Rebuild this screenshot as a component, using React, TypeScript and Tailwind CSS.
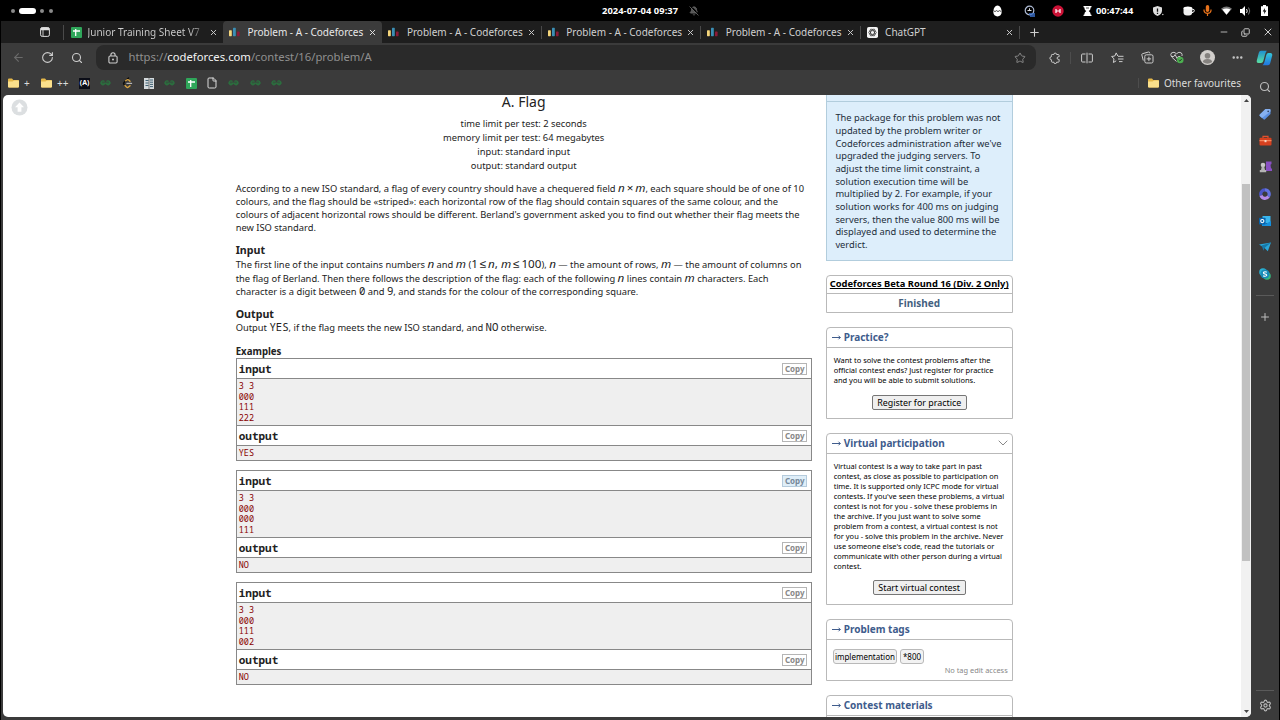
import type { ReactNode } from 'react'
import clsx from 'clsx'
import { ArrowLeft, BellOff, Copy, File, Minus, MoreHorizontal, Plus, RotateCw, Search, Settings, Star, X } from 'lucide-react'

const samples = [
    { input: ['3 3', '000', '111', '222'], output: 'YES' },
    { input: ['3 3', '000', '000', '111'], output: 'NO', hovered: true },
    { input: ['3 3', '000', '111', '002'], output: 'NO' }
]

const alertLines = [
    'The package for this problem was not',
    'updated by the problem writer or',
    "Codeforces administration after we've",
    'upgraded the judging servers. To',
    'adjust the time limit constraint, a',
    'solution execution time will be',
    'multiplied by 2. For example, if your',
    'solution works for 400 ms on judging',
    'servers, then the value 800 ms will be',
    'displayed and used to determine the',
    'verdict.'
]

const practiceLines = [
    'Want to solve the contest problems after the',
    'official contest ends? Just register for practice',
    'and you will be able to submit solutions.'
]

const virtualLines = [
    'Virtual contest is a way to take part in past',
    'contest, as close as possible to participation on',
    'time. It is supported only ICPC mode for virtual',
    "contests. If you've seen these problems, a virtual",
    'contest is not for you - solve these problems in',
    'the archive. If you just want to solve some',
    'problem from a contest, a virtual contest is not',
    'for you - solve this problem in the archive. Never',
    "use someone else's code, read the tutorials or",
    'communicate with other person during a virtual',
    'contest.'
]

/* ---------- icons ---------- */

function Sheets() {
    return (
        <svg className="w-[11px] h-[11px]" viewBox="0 0 11 11">
            <rect width="11" height="11" rx="1" fill="#2fa65a" />
            <path d="M2 4h7M4.7 2v7" stroke="#fff" strokeWidth="1.3" />
        </svg>
    )
}

function CodeforcesIcon() {
    return (
        <svg className="w-[11px] h-[10px] ml-px" viewBox="0 0 11 10">
            <rect x="0" y="3.2" width="2.8" height="6" rx=".6" fill="#f5d67b" />
            <rect x="4" y="0.8" width="2.8" height="8.4" rx=".6" fill="#3b8fb5" />
            <rect x="8" y="4.6" width="2.6" height="4.6" rx=".6" fill="#8c1a38" />
        </svg>
    )
}

function GptIcon() {
    return (
        <svg className="w-[11px] h-[11px] ml-px" viewBox="0 0 11 11">
            <rect width="11" height="11" rx="1.8" fill="#f4f4f4" />
            <g fill="none" stroke="#333" strokeWidth=".7">
                <ellipse cx="5.5" cy="5.5" rx="3.8" ry="1.9" />
                <ellipse cx="5.5" cy="5.5" rx="3.8" ry="1.9" transform="rotate(60 5.5 5.5)" />
                <ellipse cx="5.5" cy="5.5" rx="3.8" ry="1.9" transform="rotate(120 5.5 5.5)" />
            </g>
        </svg>
    )
}

function Folder() {
    return (
        <svg className="w-[11px] h-[10px]" viewBox="0 0 11 10">
            <path d="M0 1.5Q0 .5 1 .5h3L5.3 2H10q1 0 1 1v5.500q0 1-1 1H1q-1 0-1-1z" fill="#e5b84a" />
            <path d="M0 3.500h4.500L6 2.600h5v6q0 .9-1 .9H1q-1 0-1-1z" fill="#fbe08c" />
        </svg>
    )
}

function GfgIcon() {
    return (
        <svg className="w-[11px] h-[6px]" viewBox="0 0 11 6" fill="none" stroke="#2b6e3e" strokeWidth="1.3">
            <path d="M4.500 1.600A1.900 1.900 0 1 0 4.900 3.200H.3M6.500 1.600A1.900 1.900 0 1 1 6.100 3.200h4.600M4.900 3.200h1.200" />
        </svg>
    )
}

function BracketIcon() {
    return (
        <span className="w-[11px] h-[11px] bg-[#0b0d17] text-white text-[7px] leading-[10px] font-bold text-center">(A)</span>
    )
}

function LeetIcon() {
    return (
        <svg className="w-[11px] h-[12px]" viewBox="0 0 11 12" fill="none" strokeWidth="1.4" strokeLinecap="round">
            <path d="M6.500 1L2 5.500q-.9 1 0 2L3 8.600" stroke="#0c0c0c" />
            <path d="M3 8.600l1.500 1.500q1 .9 2 0L8 8.700M3.700 3.800l1-.8q1-.8 2 0L8 4.200" stroke="#d9a441" />
            <path d="M5 6.400h4.500" stroke="#b5b5b5" />
        </svg>
    )
}

function GridIcon() {
    return (
        <svg className="w-[10px] h-[11px]" viewBox="0 0 10 11">
            <rect width="10" height="11" fill="#d5dadd" />
            <path d="M1.500 2.500h3M1.500 5h3M1.500 7.500h3M6 2h3M6 4.200h3M6 6.400h3M6 8.600h3" stroke="#3f6274" strokeWidth="1" />
            <path d="M5 0v11" stroke="#3a3a3a" strokeWidth=".6" />
        </svg>
    )
}

function WorkspaceIcon() {
    return (
        <svg className="w-[10px] h-[10px]" viewBox="0 0 10 10">
            <rect x=".6" y=".6" width="8.8" height="8.8" rx="1.6" fill="none" stroke="#ddd" strokeWidth="1" />
            <path d="M.6 2Q.8.6 2 .6h6Q9.4.6 9.4 2v1.2H.6z" fill="#ddd" />
            <path d="M3 3v6" stroke="#ddd" strokeWidth=".9" />
        </svg>
    )
}

function LockIcon() {
    return (
        <svg className="w-[10px] h-[12px]" viewBox="0 0 10 12" fill="none" stroke="currentColor">
            <rect x=".9" y="4" width="8.200" height="7" rx="1.200" strokeWidth="1.100" />
            <path d="M2.900 4V2.900a2.100 2.100 0 0 1 4.200 0V4" strokeWidth="1.100" />
            <circle cx="5" cy="7.500" r="1" fill="currentColor" stroke="none" />
        </svg>
    )
}

function ExtensionIcon() {
    return (
        <svg className="w-[12px] h-[12px]" viewBox="0 0 12 12" fill="none" stroke="currentColor" strokeLinejoin="round">
            <path d="M3.200 2.500h1.600a1.400 1.400 0 0 1 2.800 0h1.700q.8 0 .8.800v1.500h-.7a1.300 1.300 0 0 0 0 2.600h.7v2q0 .8-.8.800H7.600a1.400 1.400 0 0 1-2.800 0H3.200q-.8 0-.8-.8V7.700a1.500 1.500 0 0 1 0-3V3.300q0-.8.8-.8z" />
        </svg>
    )
}

function CopilotIcon() {
    return (
        <svg className="w-[17px] h-[16px]" viewBox="0 0 17 16">
            <defs>
                <linearGradient id="cpa" x1="0" y1="0" x2="0" y2="1">
                    <stop offset="0" stopColor="#1f8fd0" />
                    <stop offset="1" stopColor="#5be0a2" />
                </linearGradient>
                <linearGradient id="cpb" x1="0" y1="0" x2="0" y2="1">
                    <stop offset="0" stopColor="#35c8d8" />
                    <stop offset="1" stopColor="#2175e0" />
                </linearGradient>
            </defs>
            <path d="M5 .8h5.800Q9.600 2 8.900 5L7.300 11Q6.700 13 5 13H2.600Q.3 13 .8 10.500L2.800 2.800Q3.300.8 5 .8z" fill="url(#cpa)" />
            <path d="M12 15.300H6.500Q8 14 8.600 11.500L10.300 5Q10.800 3 12.500 3h1.900q2.300 0 1.800 2.500L14.200 13.300Q13.700 15.300 12 15.300z" fill="url(#cpb)" />
        </svg>
    )
}

/* ---------- desktop top bar ---------- */

function TopBar() {
    return (
        <div className="flex items-center h-[21px] bg-black text-white text-[9.33px] font-bold shrink-0">
            <div className="flex items-center w-[602px] pl-[11px]">
                <span className="w-[4px] h-[4px] rounded-full bg-[#8a8a8a]" />
                <span className="w-[17px] h-[6px] rounded-full bg-white ml-1" />
                <span className="w-[4px] h-[4px] rounded-full bg-[#8a8a8a] ml-1" />
                <span className="w-[4px] h-[4px] rounded-full bg-[#8a8a8a] ml-[5px]" />
            </div>
            <span className="w-[87px] whitespace-nowrap tracking-[0.070px]">2024-07-04 09:37</span>
            <BellOff className="w-[10px] h-[10px] text-[#6a6a6a] fill-[#555]" />
            <div className="flex items-center ml-auto h-full pr-[11px]">
                <svg className="w-[9px] h-[12px] mr-[22px]" viewBox="0 0 9 12">
                    <path d="M4.500.5C7 .5 8.700 4 8.700 6.800S6.800 11.500 4.500 11.500.300 9.600.300 6.800 2 .5 4.500.5z" fill="#fff" />
                    <path d="M.5 5.600l1.500 1 1.500-1 1.500 1 1.500-1 1.800 1" stroke="#222" strokeWidth=".8" fill="none" />
                </svg>
                <svg className="w-[12px] h-[12px] mr-[16px]" viewBox="0 0 12 12" fill="none">
                    <circle cx="5.500" cy="5.500" r="4.300" stroke="#aebbd4" strokeWidth="1.200" />
                    <path d="M3.500 5.500h4M5.500 3.300v2" stroke="#ddd" />
                    <path d="M5 9h6M6 11h5" stroke="#3c73ce" strokeWidth="1.500" />
                </svg>
                <svg className="w-[12px] h-[12px] mr-[19px]" viewBox="0 0 12 12">
                    <circle cx="6" cy="6" r="5.700" fill="#cb1236" />
                    <path d="M4 4v4M8 4v4M4 6h4" stroke="#fff" strokeWidth="1.200" />
                </svg>
                <svg className="w-[9px] h-[10px] mr-1" viewBox="0 0 9 10" fill="#fff">
                    <path d="M.5 0h8v1.300h-.7Q7.600 4 5.700 5q1.900 1 2.100 3.700h.7V10h-8V8.700h.7Q1.400 6 3.300 5 1.400 4 1.200 1.300H.5z" />
                    <path d="M3 2h3" stroke="#000" strokeWidth=".7" />
                </svg>
                <span className="w-[57px]">00:47:44</span>
                <svg className="w-[11px] h-[10px] mr-[19px]" viewBox="0 0 11 10">
                    <path d="M4.500 0L9 1.500v3Q9 8 4.500 10 0 8 0 4.500v-3z" fill="#ddd" />
                    <path d="M4.500 2.500v3.200M4.500 6.700v1.200" stroke="#111" strokeWidth="1.300" />
                    <circle cx="9.800" cy="8.500" r=".8" fill="#bbb" />
                </svg>
                <svg className="w-[12px] h-[10px] mr-[8px]" viewBox="0 0 12 10">
                    <path d="M.5 2h8.800v4.500Q9 9.500 6 9.500H4Q.7 9.500.5 6.500z" fill="#eee" />
                    <ellipse cx="4.900" cy="2" rx="4.400" ry="1.600" fill="#fff" />
                    <path d="M9 3.300h1q1.500 0 1.300 1.500Q11 6.500 9 6.700" fill="none" stroke="#eee" />
                </svg>
                <svg className="w-[9px] h-[11px] mr-[9px]" viewBox="0 0 9 11">
                    <rect x="2.800" y="0" width="3.400" height="7" rx="1.700" fill="#e8731c" />
                    <path d="M1 4.500v1Q1.300 8.300 4.500 8.300T8 5.500v-1M4.500 8.300V11" fill="none" stroke="#e8731c" strokeWidth="1.200" />
                </svg>
                <svg className="w-[11px] h-[9px] mr-[8px]" viewBox="0 0 11 9">
                    <path d="M0 2.700Q5.500-1.500 11 2.700L5.500 8.700z" fill="#777" />
                    <path d="M1.500 3.600Q5.500 1.500 9.500 3.600L5.500 8.700z" fill="#fff" />
                </svg>
                <svg className="w-[11px] h-[10px] mr-[9px]" viewBox="0 0 11 10">
                    <path d="M0 3h2l3-3v10L2 7H0z" fill="#fff" />
                    <path d="M6.500 3q1.500 2 0 4" fill="none" stroke="#eee" />
                    <path d="M8.500 1.500q2.500 3.500 0 7" fill="none" stroke="#777" />
                </svg>
                <svg className="w-[9px] h-[11px]" viewBox="0 0 9 11">
                    <path d="M3 0h3v1.300h2V11H1V1.300h2z" fill="#fff" />
                    <path d="M5 3L2.700 6.500h1.700L4 9.200l2.400-3.600H4.700z" fill="#000" />
                </svg>
            </div>
        </div>
    )
}

/* ---------- browser chrome ---------- */

function Tab({ icon, title, active, faded, divider }: { icon: ReactNode; title: string; active?: boolean; faded?: boolean; divider?: boolean }) {
    return (
        <div className={clsx('relative flex items-center w-[159.4px] h-full pl-[5px] text-[10px] shrink-0', active ? 'bg-[#3b3b3b] text-[#e8e8e8] rounded-t-[4px]' : 'text-[#d0d0d0]')}>
            <span className={clsx('flex items-center shrink-0', faded ? 'w-[17px]' : 'w-[19.500px]')}>{icon}</span>
            <span className={clsx('w-[118px] whitespace-nowrap overflow-hidden', faded && 'bg-linear-to-r from-[#d0d0d0] from-86% to-[#444] to-98% bg-clip-text text-transparent')}>{title}</span>
            <X className={clsx('w-[9px] h-[9px]', faded ? 'ml-[3px]' : 'ml-[2px]')} strokeWidth={2.500} />
            {divider && <span className="absolute right-0 top-[5px] w-px h-[13px] bg-[#4a4a4a]" />}
        </div>
    )
}

function TabStrip() {
    return (
        <div className="flex items-center h-[22px] bg-[#1e1e1e] text-[#cfcfcf] shrink-0">
            <div className="flex items-center justify-between w-[63px] h-full pl-[39px]">
                <WorkspaceIcon />
                <span className="w-px h-[15px] bg-[#4a4a4a]" />
            </div>
            <div className="flex h-full pl-[1.500px]">
                <div className="flex w-[157.500px] overflow-hidden">
                    <Tab icon={<Sheets />} title="Junior Training Sheet V7" faded />
                </div>
                <Tab icon={<CodeforcesIcon />} title="Problem - A - Codeforces" active />
                <Tab icon={<CodeforcesIcon />} title="Problem - A - Codeforces" divider />
                <Tab icon={<CodeforcesIcon />} title="Problem - A - Codeforces" divider />
                <Tab icon={<CodeforcesIcon />} title="Problem - A - Codeforces" divider />
                <Tab icon={<GptIcon />} title="ChatGPT" divider />
            </div>
            <Plus className="w-[13px] h-[13px] ml-2" strokeWidth={2} />
            <div className="flex items-center ml-auto gap-[12px] pr-[5px]">
                <Minus className="w-[10px] h-[10px]" />
                <Copy className="w-[9px] h-[9px] -scale-x-100 rotate-180" strokeWidth={2.500} />
                <X className="w-[12px] h-[12px]" />
            </div>
        </div>
    )
}

function Tool({ children }: { children: ReactNode }) {
    return <span className="flex justify-center items-center w-[30px] shrink-0">{children}</span>
}

function Toolbar() {
    return (
        <div className="flex items-center h-[29px] text-[#cdcdcd] shrink-0">
            <div className="flex items-center w-[95px] pl-[11px]">
                <ArrowLeft className="w-[13px] h-[13px] text-[#6b6b6b]" strokeWidth={2} />
                <RotateCw className="w-[13px] h-[13px] ml-[16px]" strokeWidth={2} />
                <Search className="w-[12px] h-[12px] ml-[17px]" strokeWidth={2.200} />
            </div>
            <div className="flex items-center w-[940px] h-[25px] rounded-[8px] bg-[#2a2a2a] pl-[12px] pr-[10px]">
                <LockIcon />
                <span className="text-[11.270px] text-[#8f8f8f] ml-[10.500px]">
                    https://<span className="text-[#f2f2f2]">codeforces.com</span>/contest/16/problem/A
                </span>
                <Star className="w-[12px] h-[12px] ml-auto text-[#888]" strokeWidth={2} />
            </div>
            <div className="flex items-center pl-[4px]">
                <Tool><ExtensionIcon /></Tool>
                <span className="w-px h-[12px] mr-px bg-[#4d4d4d]" />
                <Tool>
                    <svg className="w-[12px] h-[12px]" viewBox="0 0 12 12" fill="none" stroke="currentColor">
                        <path d="M4.500 2h-3q-.9 0-.9 1v6q0 1 .9 1h3M7.500 2h3q.9 0 .9 1v6q0 1-.9 1h-3M6 .7v10.600" />
                    </svg>
                </Tool>
                <Tool>
                    <svg className="w-[13px] h-[12px]" viewBox="0 0 13 12" fill="none" stroke="currentColor" strokeLinejoin="round">
                        <path d="M6.800 4L5.200.9 3.800 4l-3.200.5L3 6.800l-.6 3.700 2.800-1.700M7 4.300h5.500M7 7h5.500M8 9.600h3.500" />
                    </svg>
                </Tool>
                <Tool>
                    <svg className="w-[13px] h-[13px]" viewBox="0 0 13 13" fill="none" stroke="currentColor">
                        <rect x="3.800" y="3.800" width="8.200" height="8.200" rx="1.500" />
                        <path d="M7.900 5.700v4.400M5.700 7.900h4.400M2.300 9.500L.8 3.800q-.2-.9.700-1.100l6-1.700q.9-.2 1.200.8l.2.600" />
                    </svg>
                </Tool>
                <Tool>
                    <svg className="w-[14px] h-[13px]" viewBox="0 0 14 13" fill="none" stroke="currentColor">
                        <path d="M6.500 10.500L1.700 6Q-.1 3.500 1.500 1.900 4 .2 6.500 2.700 9 .2 11.300 1.900 12.500 3.200 12 5M1.500 5.500h2.300l1.300-2 2 4 1.200-2h2" />
                        <circle cx="10.200" cy="9" r="3.300" fill="#4caf50" stroke="none" />
                        <path d="M8.700 9l1.100 1.100 2-2.200" stroke="#263b26" />
                    </svg>
                </Tool>
                <Tool>
                    <svg className="w-[15px] h-[15px]" viewBox="0 0 15 15">
                        <circle cx="7.500" cy="7.500" r="7.500" fill="#d2cfcc" />
                        <circle cx="7.500" cy="5.800" r="2.800" fill="#85827f" />
                        <path d="M2.800 12q.4-3 4.700-3t4.700 3q-4.700 3.500-9.400 0z" fill="#85827f" />
                    </svg>
                </Tool>
                <Tool><MoreHorizontal className="w-[13px] h-[13px]" strokeWidth={2.500} /></Tool>
                <span className="ml-[4px] shrink-0"><CopilotIcon /></span>
            </div>
        </div>
    )
}

function BookmarkBar() {
    const icons = [BracketIcon, GfgIcon, LeetIcon, GridIcon, GfgIcon, Sheets, null, GfgIcon, GfgIcon, GfgIcon]
    return (
        <div className="flex items-center h-[22px] mb-px text-[10px] text-[#dcdcdc] shrink-0">
            <span className="flex items-center gap-[5px] w-[33px] pl-[7px]"><Folder />+</span>
            <span className="flex items-center gap-[5px] w-[40px] pl-[7px]"><Folder />++</span>
            {icons.map((Icon, i) => (
                <span key={i} className="flex items-center justify-center w-[21.300px]">
                    {Icon ? <Icon /> : <File className="w-[12px] h-[12px]" strokeWidth={2} />}
                </span>
            ))}
            <div className="flex items-center ml-auto mr-[38px]">
                <span className="w-px h-[10px] mr-[9px] bg-[#4d4d4d]" />
                <Folder />
                <span className="ml-[5px]">Other favourites</span>
            </div>
        </div>
    )
}

function SideCell({ children }: { children: ReactNode }) {
    return <span className="flex items-center justify-center h-[26.700px] shrink-0">{children}</span>
}

function EdgeSidebar() {
    return (
        <div className="flex flex-col w-[28px] text-[#bdbdbd] shrink-0 -mt-[21px]">
            <SideCell><Search className="w-[12px] h-[12px]" strokeWidth={2.300} /></SideCell>
            <SideCell>
                <svg className="w-[12px] h-[12px]" viewBox="0 0 12 12">
                    <path d="M6.500 1h4q1 0 1 1v4L6 11.300q-.8.7-1.500 0L.8 8q-.7-.8 0-1.500z" fill="#5b8fe0" />
                    <path d="M6.500 1h4q1 0 1 1v1.500L3 10 .8 8q-.7-.8 0-1.500z" fill="#86b0ef" />
                    <circle cx="9.200" cy="3.300" r=".9" fill="#31456a" />
                </svg>
            </SideCell>
            <SideCell>
                <svg className="w-[13px] h-[11px]" viewBox="0 0 13 11">
                    <path d="M4 3V1.300h5V3" fill="none" stroke="#e2512d" strokeWidth="1.200" />
                    <rect x=".5" y="2.700" width="12" height="7.800" rx="1" fill="#d6401f" />
                    <path d="M.5 5.700h12" stroke="#ff9469" />
                    <rect x="5.500" y="5" width="2" height="2.200" fill="#f6d2c0" />
                </svg>
            </SideCell>
            <SideCell>
                <svg className="w-[13px] h-[12px]" viewBox="0 0 13 12">
                    <path d="M7 .5h5.500V3l-1 .8L12 7.500h1V10H7z" fill="#8a50c4" />
                    <circle cx="4" cy="4" r="2.300" fill="#c7c7c7" />
                    <path d="M2.800 5.500h2.400L6 9h1.200v2.300H.8V9H2z" fill="#b4b4b4" />
                </svg>
            </SideCell>
            <SideCell>
                <svg className="w-[12px] h-[12px]" viewBox="0 0 12 12" fill="none" strokeWidth="3.200">
                    <path d="M6 1.900A4.200 4.200 0 0 0 2 7.500" stroke="#4b55c8" />
                    <path d="M2 7.500A4.200 4.200 0 0 0 9.500 8.400" stroke="#b58ae8" />
                    <path d="M9.500 8.400A4.200 4.200 0 0 0 6 1.900" stroke="#6272e0" />
                </svg>
            </SideCell>
            <SideCell>
                <svg className="w-[12px] h-[12px]" viewBox="0 0 12 12">
                    <rect x="3.500" y="1" width="8" height="7" fill="#39b6ee" />
                    <path d="M3 6l4.500 2.500L12 6v5H3z" fill="#1490df" />
                    <rect y="2.800" width="6.600" height="6.600" rx=".7" fill="#0763ad" />
                    <circle cx="3.300" cy="6.100" r="1.600" fill="none" stroke="#fff" strokeWidth="1.100" />
                </svg>
            </SideCell>
            <SideCell>
                <svg className="w-[12px] h-[10px]" viewBox="0 0 12 10">
                    <path d="M0 2.500L12 .5 8.800 9.300 5.500 6z" fill="#2aa6d8" />
                    <path d="M2.500 3.600L12 .5 5.500 6l-.8 2.800z" fill="#1678a8" />
                </svg>
            </SideCell>
            <SideCell>
                <svg className="w-[12px] h-[12px]" viewBox="0 0 12 12">
                    <circle cx="4" cy="4" r="3.800" fill="#2bb1d3" />
                    <circle cx="8" cy="8" r="3.800" fill="#34b77c" />
                    <circle cx="6" cy="6" r="4.600" fill="#178bb8" />
                    <path d="M7.800 4.300Q6 3.200 4.600 4.300 4 5.500 6 6t1.600 1.600Q6 8.800 4.200 7.700" fill="none" stroke="#fff" strokeWidth="1.100" />
                </svg>
            </SideCell>
            <span className="mx-[5px] mt-[7px] h-px bg-[#5a5a5a]" />
            <span className="flex justify-center mt-[15px]"><Plus className="w-[12px] h-[12px]" strokeWidth={2} /></span>
            <span className="mx-[5px] mt-auto h-px bg-[#5a5a5a]" />
            <span className="flex justify-center mt-[8px] mb-[8px]"><Settings className="w-[13px] h-[13px]" strokeWidth={2} /></span>
        </div>
    )
}

/* ---------- problem page ---------- */

function V({ children }: { children: ReactNode }) {
    return <i className="text-[11.670px] leading-none">{children}</i>
}

function Big({ children }: { children: ReactNode }) {
    return <span className="text-[11.670px] leading-none">{children}</span>
}

// binary operator with the thin spacing used in formulas
function Op({ children }: { children: ReactNode }) {
    return <span className="mx-[1.900px] text-[11.670px] leading-none">{children}</span>
}

function Tt({ children }: { children: ReactNode }) {
    return <span className="font-['Noto_Sans_Mono','DejaVu_Sans_Mono',monospace] text-[10.670px] leading-none">{children}</span>
}

function SampleHeader({ label, hovered }: { label: string; hovered?: boolean }) {
    return (
        <div className="flex items-center justify-between h-[19px] pl-[2px] pr-[3.500px] font-bold">
            <span className="font-['Noto_Sans_Mono','DejaVu_Sans_Mono',monospace] text-[11px] leading-[16px]">{label}</span>
            <span className={clsx('flex items-center justify-center w-[25px] h-[12px] border text-[8px] leading-[10px]', hovered ? 'bg-[#dfeef8] border-[#b5cbdc] text-[#778899]' : 'border-[#b5b5b5] text-[#888]')}>Copy</span>
        </div>
    )
}

function Sample({ input, output, hovered }: { input: string[]; output: string; hovered?: boolean }) {
    return (
        <div className="h-[103px] mb-[9px] border border-[#888]">
            <SampleHeader label="input" hovered={hovered} />
            <div className="h-[48px] pt-[2px] pl-[2px] border-y border-[#888] bg-[#efefef] font-['Noto_Sans_Mono','DejaVu_Sans_Mono',monospace] text-[8.500px] leading-[10.670px] text-[#880000]">
                {input.map((line, i) => <div key={i}>{line}</div>)}
            </div>
            <SampleHeader label="output" />
            <div className="h-[15px] pl-[2px] border-t border-[#888] bg-[#efefef] font-['Noto_Sans_Mono','DejaVu_Sans_Mono',monospace] text-[8.500px] leading-[14px] text-[#880000]">{output}</div>
        </div>
    )
}

function Statement() {
    return (
        <div className="w-[576px] ml-[232.700px] text-[9.330px] text-[#222] whitespace-nowrap shrink-0">
            <div className="text-center">
                <div className="text-[14px] leading-[14px] mb-[8px]">A. Flag</div>
                <div className="leading-[14px]">
                    <p>time limit per test: 2 seconds</p>
                    <p>memory limit per test: 64 megabytes</p>
                    <p>input: standard input</p>
                    <p>output: standard output</p>
                </div>
            </div>
            <div className="mt-[9px] leading-[13px] *:h-[13px]">
                <p>According to a new ISO standard, a flag of every country should have a chequered field <V>n</V><Op>×</Op><V>m</V>, each square should be of one of 10</p>
                <p>colours, and the flag should be «striped»: each horizontal row of the flag should contain squares of the same colour, and the</p>
                <p>colours of adjacent horizontal rows should be different. Berland's government asked you to find out whether their flag meets the</p>
                <p>new ISO standard.</p>
            </div>
            <h3 className="mt-[9px] text-[10.670px] leading-[14px] font-bold">Input</h3>
            <div className="mt-px mb-[7px] leading-[14px]">
                <p className="h-[14px]">The first line of the input contains numbers <V>n</V> and <V>m</V> (<Big>1</Big><Op>≤</Op><V>n</V><Big>, </Big><V>m</V><Op>≤</Op><Big>100</Big>), <V>n</V> — the amount of rows, <V>m</V> — the amount of columns on</p>
                <p className="h-[13px]">the flag of Berland. Then there follows the description of the flag: each of the following <V>n</V> lines contain <V>m</V> characters. Each</p>
                <p className="h-[15px]">character is a digit between <Tt>0</Tt> and <Tt>9</Tt>, and stands for the colour of the corresponding square.</p>
            </div>
            <h3 className="text-[10.670px] leading-[14px] font-bold">Output</h3>
            <p className="h-[14px] leading-[14px]">Output <Tt>YES</Tt>, if the flag meets the new ISO standard, and <Tt>NO</Tt> otherwise.</p>
            <h4 className="pt-[10px] h-[23px] text-[9.670px] leading-[14px] font-bold">Examples</h4>
            {samples.map((s, i) => <Sample key={i} {...s} />)}
        </div>
    )
}

function Panel({ title, chevron, className, children }: { title: string; chevron?: boolean; className: string; children?: ReactNode }) {
    return (
        <div className={clsx('border border-[#b9b9b9] rounded-t-[4px] mb-[14px] shrink-0', className)}>
            <div className="flex items-center h-[20px] pl-[5px] pr-[4px] pb-px border-b border-[#b9b9b9] text-[#405c8c] text-[10px] leading-[18px] font-bold">
                <svg className="w-[9px] h-[7px] mr-[3px] mt-px" viewBox="0 0 9 7" fill="none" stroke="currentColor">
                    <path d="M0 3.500h8.300M6.500 1.700l1.800 1.800-1.800 1.800" />
                </svg>
                <span className="-mt-px">{title}</span>
                {chevron && (
                    <svg className="w-[10px] h-[6px] ml-auto" viewBox="0 0 10 6" fill="none" stroke="#888">
                        <path d="M.7.700L5 5l4.300-4.300" />
                    </svg>
                )}
            </div>
            {children}
        </div>
    )
}

function PageButton({ children }: { children: ReactNode }) {
    return <button className="block mx-auto h-[15px] px-[4.500px] border border-[#767676] rounded-[2px] bg-[#efefef] text-[8.890px] leading-[13px] text-black">{children}</button>
}

function PageSidebar() {
    return (
        <div className="flex flex-col w-[187px] ml-[14px] text-black whitespace-nowrap shrink-0">
            <div className="h-[166px] mb-[14px] border border-t-0 border-[#b2cddd] bg-[#ddeefb] text-[9.330px] leading-[12.640px] text-[#1c2d3a] shrink-0">
                <div className="h-[7px] border-b border-[#b2cddd]" />
                <div className="pt-[10.400px] pl-[8.700px]">
                    {alertLines.map((line) => <p key={line}>{line}</p>)}
                </div>
            </div>
            <div className="h-[38px] mb-[14px] border border-[#b9b9b9] rounded-t-[4px] text-center font-bold shrink-0">
                <div className="h-[18px] border-b border-[#b9b9b9] text-[9.330px] leading-[16px] underline">Codeforces Beta Round 16 (Div. 2 Only)</div>
                <div className="text-[10px] leading-[18px] text-[#445f80]">Finished</div>
            </div>
            <Panel title="Practice?" className="h-[92px]">
                <div className="pt-[7px] pl-[7px] mb-[9.500px] text-[7.500px] leading-[10px]">
                    {practiceLines.map((line) => <p key={line}>{line}</p>)}
                </div>
                <PageButton>Register for practice</PageButton>
            </Panel>
            <Panel title="Virtual participation" chevron className="h-[172px]">
                <div className="pt-[7px] pl-[7px] mb-[9px] text-[7.480px] leading-[10px]">
                    {virtualLines.map((line) => <p key={line}>{line}</p>)}
                </div>
                <PageButton>Start virtual contest</PageButton>
            </Panel>
            <Panel title="Problem tags" className="h-[62px]">
                <div className="flex gap-[3px] pt-[9px] pl-[6px] text-[8px] leading-[13px]">
                    <span className="h-[15px] px-[1.200px] border border-[#b9b9b9] rounded-[3px] bg-[#f2f2f2]">implementation</span>
                    <span className="h-[15px] px-[1.800px] border border-[#b9b9b9] rounded-[3px] bg-[#f2f2f2]">*800</span>
                </div>
                <p className="pr-[4px] mt-px text-right text-[7.400px] leading-[10px] text-[#888]">No tag edit access</p>
            </Panel>
            <Panel title="Contest materials" className="h-[60px]" />
        </div>
    )
}

function Scrollbar() {
    return (
        <div className="flex flex-col items-center w-[10px] ml-auto bg-[#f1f1f1] shrink-0">
            <svg className="w-[5px] h-[3px] mt-1" viewBox="0 0 5 3"><path d="M0 3L2.500 0 5 3z" fill="#444" /></svg>
            <span className="w-[8px] h-[377px] mt-[82px] bg-[#c1c1c1]" />
            <svg className="w-[5px] h-[3px] mt-auto mb-1" viewBox="0 0 5 3"><path d="M0 0h5L2.500 3z" fill="#444" /></svg>
        </div>
    )
}

export default function App() {
    return (
        <div className="flex flex-col w-[1280px] h-[720px] overflow-hidden bg-black font-['Noto_Sans',sans-serif]">
            <TopBar />
            <div className="flex flex-col flex-1 min-h-0 mx-px bg-[#3b3b3b]">
                <TabStrip />
                <Toolbar />
                <BookmarkBar />
                <div className="flex flex-1 min-h-0">
                    <div className="relative flex w-[1248px] h-[622px] ml-[2px] rounded-[5px] bg-white overflow-hidden shrink-0">
                        <svg className="absolute left-[8px] top-[4px] w-[17px] h-[17px]" viewBox="0 0 17 17">
                            <circle cx="8.500" cy="8.500" r="8" fill="#dcdfe1" />
                            <path d="M8.500 3.500l4.500 4.800h-2.600v4.500H6.600V8.300H4z" fill="#fff" />
                        </svg>
                        <Statement />
                        <PageSidebar />
                        <Scrollbar />
                    </div>
                    <EdgeSidebar />
                </div>
            </div>
        </div>
    )
}
